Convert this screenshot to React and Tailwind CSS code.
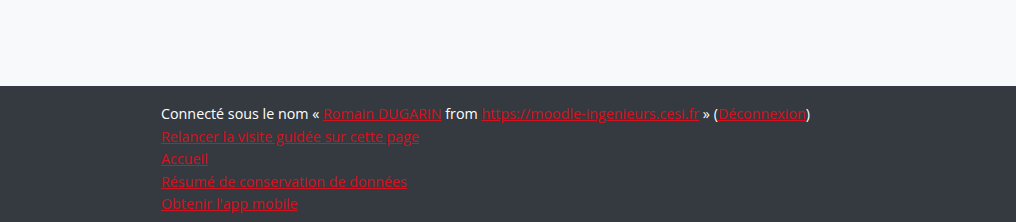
export default function App() {
  const links = [
    'Relancer la visite guidée sur cette page',
    'Accueil',
    'Résumé de conservation de données',
    "Obtenir l'app mobile",
  ]

  return (
    <div className="min-h-[222px] bg-[#f8f9fa] font-['Open_Sans',sans-serif]">
      <div className="h-[86px]" />
      <footer className="bg-[#343a40] text-white text-[14.3px] leading-[22.5px] pt-[17px] pb-6">
        <div className="pl-[161px]">
          <div>
            Connecté sous le nom «{' '}
            <a href="#" className="text-[#d4111e] underline">Romain DUGARIN</a> from{' '}
            <a href="#" className="text-[#d4111e] underline">https://moodle-ingenieurs.cesi.fr</a> » (
            <a href="#" className="text-[#d4111e] underline">Déconnexion</a>)
          </div>
          {links.map((l) => (
            <div key={l}>
              <a href="#" className="text-[#d4111e] underline">{l}</a>
            </div>
          ))}
        </div>
      </footer>
    </div>
  )
}
